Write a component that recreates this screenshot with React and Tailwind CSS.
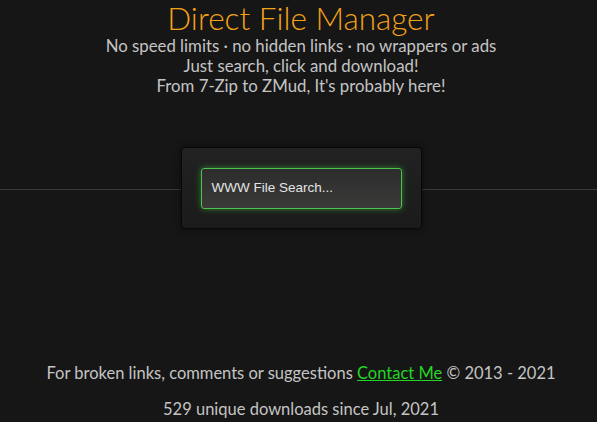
export default function App() {
  return (
    <div className="min-h-[422px] w-full bg-[#161616] flex flex-col items-center pl-[5px]">
      <div className="flex flex-col items-center font-['Lato',sans-serif] text-[#c4c4c4]">
        <h1 className="text-[31.5px] leading-[38px] font-light text-[#f5a218] mt-[-1px]">Direct File Manager</h1>
        <p className="text-[16.8px] leading-[20px] mt-[-1px]">No speed limits · no hidden links · no wrappers or ads</p>
        <p className="text-[16.8px] leading-[20px]">Just search, click and download!</p>
        <p className="text-[16.8px] leading-[20px]">From 7-Zip to ZMud, It's probably here!</p>
      </div>
      <div className="relative w-full mt-[51px] flex justify-center">
        <div className="absolute left-[-5px] right-0 top-[42px] h-px bg-[#3a3a3a]" />
        <div className="relative w-[241px] h-[82px] rounded-[4px] border border-[#080808] bg-gradient-to-b from-[#222222] to-[#1b1b1b] shadow-[0_0_6px_rgba(0,0,0,0.6)] flex items-center justify-center">
          <div className="w-[201px] h-[41px] rounded-[3px] border border-[#4fc14f] bg-gradient-to-b from-[#2c2c2c] to-[#3a3b39] shadow-[0_0_6px_rgba(60,200,60,0.55)] flex items-center pl-[10px] pt-[1px]">
            <span className="font-['Liberation_Sans',sans-serif] text-[13.5px] text-[#e4e4e4]">WWW File Search...</span>
          </div>
        </div>
      </div>
      <div className="flex flex-col items-center font-['Lato',sans-serif] text-[#c4c4c4] text-[16.5px] mt-[133px]">
        <p className="leading-[22px]">For broken links, comments or suggestions <a className="text-[#25d425] underline">Contact Me</a> © 2013 - 2021</p>
        <p className="leading-[22px] mt-[14px]">529 unique downloads since Jul, 2021</p>
      </div>
    </div>
  );
}
